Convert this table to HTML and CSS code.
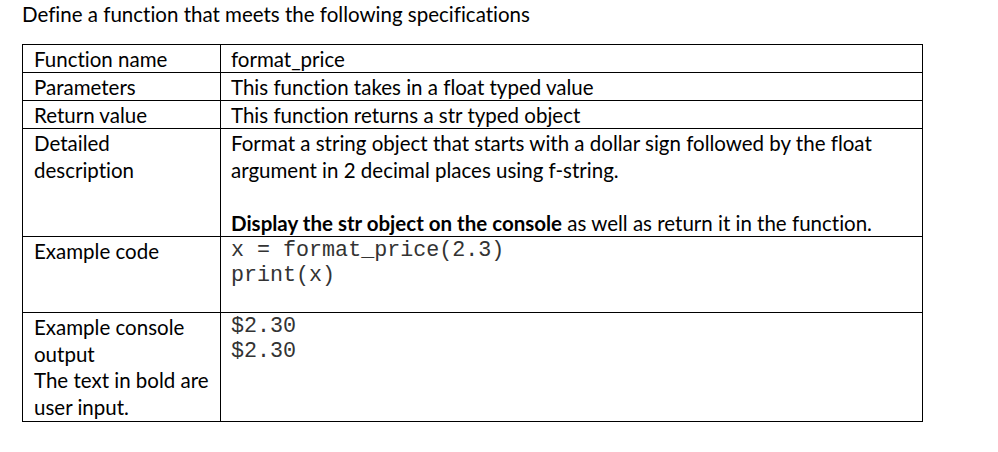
FILE: index.html
```html
<!DOCTYPE html>
<html>
<head>
<meta charset="utf-8">
<link rel="stylesheet" href="styles.css">
</head>
<body>
<div class="page">
  <p class="title">Define a function that meets the following specifications</p>
  <div class="spec">
    <div class="cell label first">Function name</div>
    <div class="cell value first">format_price</div>

    <div class="cell label">Parameters</div>
    <div class="cell value">This function takes in a float typed value</div>

    <div class="cell label">Return value</div>
    <div class="cell value">This function returns a str typed object</div>

    <div class="cell label">Detailed<br>description</div>
    <div class="cell value">Format a string object that starts with a dollar sign followed by the float<br>argument in 2 decimal places using f-string.<br><br><b>Display the str object on the console</b> as well as return it in the function.</div>

    <div class="cell label">Example code</div>
    <div class="cell value code">x = format_price(2.3)<br>print(x)</div>

    <div class="cell label last">Example console<br>output<br>The text in bold are<br>user input.</div>
    <div class="cell value code console last">$2.30<br>$2.30</div>
  </div>
</div>
</body>
</html>
```
FILE: styles.css
```css
html, body {
  margin: 0;
  padding: 0;
  background: #ffffff;
}

.page {
  padding: 0 0 0 22px;
  font-family: "Lato", "Open Sans", sans-serif;
  font-size: 20.5px;
  font-variant-ligatures: none;
  color: #000;
}

.title {
  margin: 0;
  padding-top: 1px;
  height: 43px;
  line-height: 26px;
}

.spec {
  display: grid;
  grid-template-columns: 198px 703px;
  grid-template-rows: 28px 28px 28px 108px 76px 110px;
  width: 902px;
}

.cell {
  border-top: 1px solid #000;
  border-left: 1px solid #000;
  line-height: 26.7px;
  padding-top: 1px;
  box-sizing: border-box;
  white-space: nowrap;
}

.label {
  padding-left: 11px;
}

.value {
  padding-left: 10px;
  border-right: 1px solid #000;
}

.last {
  border-bottom: 1px solid #000;
}

.code {
  font-family: "Liberation Mono", "Courier New", monospace;
  font-size: 21.7px;
  line-height: 25px;
  padding-top: 1px;
  color: #333;
}
```
